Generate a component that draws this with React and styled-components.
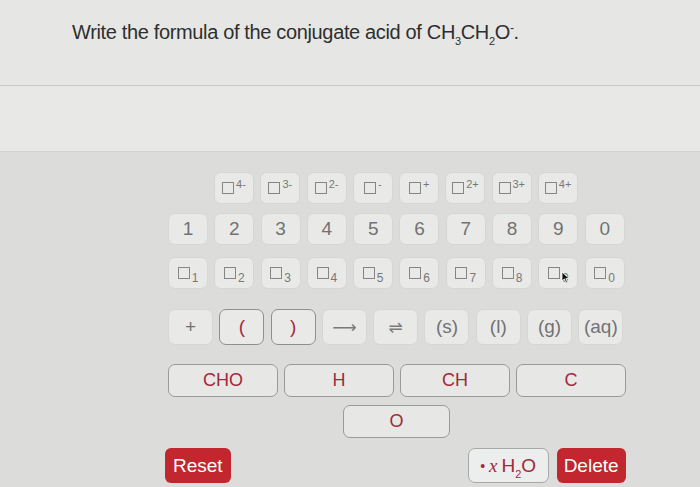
import React from "react";
import styled, { createGlobalStyle } from "styled-components";

const GlobalStyle = createGlobalStyle`
  html, body {
    margin: 0;
    padding: 0;
    background: #dcdddb;
    font-family: "Liberation Sans", Arial, sans-serif;
  }
`;

const Page = styled.div`
  width: 700px;
  height: 487px;
  overflow: hidden;
  display: flex;
  flex-direction: column;
  background: #dcdddb;
`;

const Question = styled.div`
  height: 86px;
  box-sizing: border-box;
  padding: 21px 0 0 72px;
  background: #e6e7e5;
  border-bottom: 1px solid #c9cac8;
  font-size: 20px;
  color: #2e2e2e;
  letter-spacing: -0.35px;
`;

const Sub = styled.sub`
  font-size: 11px;
  vertical-align: -6px;
  line-height: 0;
`;

const Sup = styled.sup`
  font-size: 12px;
  vertical-align: 7px;
  line-height: 0;
`;

const AnswerArea = styled.div`
  height: 65px;
  background: #e8e9e7;
  border-bottom: 1px solid #d4d5d3;
`;

const Keypad = styled.div`
  display: flex;
  flex-direction: column;
  padding: 20px 0 0 168px;
`;

const Row = styled.div`
  display: flex;
  gap: ${(p) => p.$gap || 6.3}px;
  margin-left: ${(p) => p.$indent || 0}px;
  margin-top: ${(p) => p.$top || 0}px;
`;

const Key = styled.div`
  position: relative;
  width: ${(p) => p.$w || 40}px;
  height: ${(p) => p.$h || 32}px;
  box-sizing: border-box;
  border-radius: 7px;
  background: #e9eae8;
  border: 1px solid ${(p) => (p.$outlined ? "#8f908e" : "#d6d7d5")};
  display: flex;
  align-items: center;
  justify-content: center;
  color: ${(p) => (p.$red ? "#a8283c" : "#727272")};
  font-size: ${(p) => p.$size || 19}px;
`;

const Box = styled.span`
  display: inline-block;
  width: 12px;
  height: 12px;
  border: 1px solid #858585;
  box-sizing: border-box;
`;

const Charge = styled.span`
  font-size: 11px;
  margin-left: 2px;
  margin-top: -9px;
  color: #777;
`;

const Index = styled.span`
  font-size: 12px;
  margin-left: 2px;
  margin-top: 10px;
  color: #777;
`;

const Arrow = styled.span`
  font-family: "DejaVu Sans", sans-serif;
  font-size: 17px;
  color: #7a7a7a;
`;

const ElementRow = styled.div`
  display: flex;
  gap: 6px;
  margin-top: 19px;
`;

const ElementKey = styled.div`
  width: ${(p) => p.$w || 110}px;
  height: 33px;
  box-sizing: border-box;
  border-radius: 7px;
  border: 1px solid #9a9b99;
  background: #e7e8e6;
  color: #a3283a;
  font-size: 18px;
  display: flex;
  align-items: center;
  justify-content: center;
`;

const CenterRow = styled.div`
  display: flex;
  margin: 8px 0 0 175px;
`;

const Footer = styled.div`
  display: flex;
  align-items: center;
  padding: 10px 0 0 165px;
`;

const RedButton = styled.div`
  height: 35px;
  padding: 0 ${(p) => p.$pad || 8}px;
  border-radius: 6px;
  background: #c2262e;
  color: #fff;
  font-size: 19px;
  display: flex;
  align-items: center;
  box-sizing: border-box;
`;

const Spacer = styled.div`
  flex: 0 0 237px;
`;

const WaterKey = styled.div`
  width: 81px;
  height: 35px;
  margin-right: 8px;
  box-sizing: border-box;
  border-radius: 7px;
  border: 1px solid #a8a9a7;
  background: #eceeed;
  color: #a3283a;
  font-size: 19px;
  display: flex;
  align-items: center;
  justify-content: center;
  gap: 4px;
`;

const Dot = styled.span`
  font-size: 14px;
`;

const MathX = styled.span`
  font-family: "Liberation Serif", serif;
  font-style: italic;
  font-size: 19px;
`;

const Cursor = styled.svg`
  position: absolute;
  left: 22px;
  top: 13px;
`;

const charges = ["4-", "3-", "2-", "-", "+", "2+", "3+", "4+"];
const digits = ["1", "2", "3", "4", "5", "6", "7", "8", "9", "0"];
const phaseKeys = [
  { t: "+" },
  { t: "(", red: true, outlined: true },
  { t: ")", red: true, outlined: true },
  { t: "⟶", arrow: true },
  { t: "⇌", arrow: true },
  { t: "(s)" },
  { t: "(l)" },
  { t: "(g)" },
  { t: "(aq)" },
];

export default function App() {
  return (
    <>
      <GlobalStyle />
      <Page>
        <Question>
          Write the formula of the conjugate acid of CH<Sub>3</Sub>CH
          <Sub>2</Sub>O<Sup>-</Sup>.
        </Question>
        <AnswerArea />
        <Keypad>
          <Row $indent={46}>
            {charges.map((c) => (
              <Key key={c}>
                <Box />
                <Charge>{c}</Charge>
              </Key>
            ))}
          </Row>
          <Row $top={9}>
            {digits.map((d) => (
              <Key key={d}>{d}</Key>
            ))}
          </Row>
          <Row $top={12}>
            {digits.map((d) => (
              <Key key={d}>
                <Box />
                <Index>{d}</Index>
                {d === "9" && (
                  <Cursor width="9" height="13" viewBox="0 0 9 13">
                    <path
                      d="M1 1 L1 10 L3.3 8 L5 12 L6.5 11.3 L4.8 7.6 L8 7.4 Z"
                      fill="#111"
                      stroke="#fff"
                      strokeWidth="0.8"
                    />
                  </Cursor>
                )}
              </Key>
            ))}
          </Row>
          <Row $top={20} $gap={6.3}>
            {phaseKeys.map((k) => (
              <Key
                key={k.t}
                $w={45}
                $h={36}
                $red={k.red}
                $outlined={k.outlined}
              >
                {k.arrow ? <Arrow>{k.t}</Arrow> : k.t}
              </Key>
            ))}
          </Row>
          <ElementRow>
            <ElementKey>CHO</ElementKey>
            <ElementKey>H</ElementKey>
            <ElementKey>CH</ElementKey>
            <ElementKey>C</ElementKey>
          </ElementRow>
          <CenterRow>
            <ElementKey $w={107}>O</ElementKey>
          </CenterRow>
        </Keypad>
        <Footer>
          <RedButton>Reset</RedButton>
          <Spacer />
          <WaterKey>
            <Dot>•</Dot>
            <MathX>x</MathX>
            <span>
              H<Sub>2</Sub>O
            </span>
          </WaterKey>
          <RedButton $pad={7}>Delete</RedButton>
        </Footer>
      </Page>
    </>
  );
}
